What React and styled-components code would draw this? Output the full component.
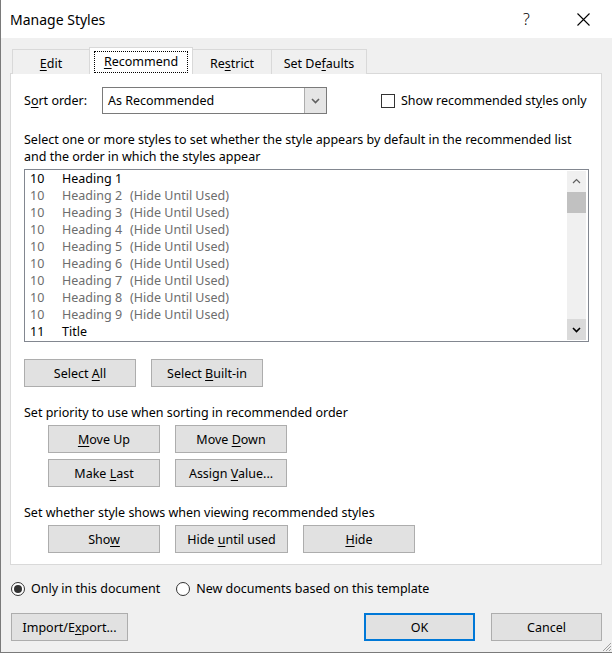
import React from 'react';
import styled, { createGlobalStyle } from 'styled-components';

const GlobalStyle = createGlobalStyle`
  html, body {
    margin: 0;
    padding: 0;
    background: #f0f0f0;
    overflow: hidden;
  }
  body {
    font-family: "Segoe UI", "Noto Sans", sans-serif;
    font-size: 12.5px;
    color: #000;
  }
`;

const Window = styled.div`
  position: relative;
  width: 612px;
  height: 653px;
  box-sizing: border-box;
  border-left: 1px solid #7a7a7a;
  border-bottom: 1px solid #7a7a7a;
  background: #f0f0f0;
  display: flex;
  flex-direction: column;
`;

const TitleBar = styled.div`
  height: 38px;
  flex: none;
  background: #fff;
  display: flex;
  align-items: center;
  padding-left: 9px;
`;

const Title = styled.div`
  flex: 1;
  font-size: 14px;
`;

const TitleButton = styled.div`
  width: 57px;
  height: 38px;
  display: flex;
  align-items: center;
  justify-content: center;
  font-size: 16px;
  font-weight: 300;
`;

const Body = styled.div`
  flex: 1;
  padding: 9px 10px 0 9px;
  display: flex;
  flex-direction: column;
`;

const TabRow = styled.div`
  display: flex;
  align-items: flex-end;
  height: 27px;
  margin-left: 2px;
  margin-bottom: -1px;
  position: relative;
  z-index: 1;
`;

const Tab = styled.div`
  box-sizing: border-box;
  width: ${(p) => p.w}px;
  height: ${(p) => (p.active ? 27 : 25)}px;
  margin-left: ${(p) => (p.first ? 0 : -1)}px;
  border: 1px solid #d9d9d9;
  border-bottom: none;
  background: ${(p) => (p.active ? '#fff' : '#f0f0f0')};
  position: relative;
  z-index: ${(p) => (p.active ? 2 : 1)};
  display: flex;
  justify-content: center;
  align-items: flex-start;
  padding-top: ${(p) => (p.active ? 3 : 4)}px;
  line-height: 19px;
`;

const FocusLabel = styled.span`
  border: 1px dotted #000;
  padding: 0 9px;
  height: 20px;
  line-height: 19px;
`;

const U = styled.span`
  text-decoration: underline;
  text-underline-offset: 2px;
`;

const Panel = styled.div`
  box-sizing: border-box;
  height: 492px;
  background: #fff;
  border: 1px solid #d9d9d9;
  padding: 13px 11px 0 13px;
  display: flex;
  flex-direction: column;
`;

const SortRow = styled.div`
  display: flex;
  align-items: center;
  height: 27px;
`;

const SortLabel = styled.div`
  width: 78px;
`;

const Combo = styled.div`
  box-sizing: border-box;
  width: 225px;
  height: 27px;
  border: 1px solid #7a7a7a;
  display: flex;
  background: #fff;
`;

const ComboValue = styled.div`
  flex: 1;
  padding-left: 5px;
  line-height: 25px;
`;

const ComboArrow = styled.div`
  width: 21px;
  background: #e5e5e5;
  border-left: 1px solid #adadad;
  display: flex;
  align-items: center;
  justify-content: center;
`;

const CheckLabel = styled.label`
  display: flex;
  align-items: center;
  margin-left: 54px;
  gap: 6px;
`;

const CheckBox = styled.span`
  box-sizing: border-box;
  width: 14px;
  height: 14px;
  border: 1px solid #333;
  background: #fff;
`;

const Text = styled.div`
  margin-top: ${(p) => p.mt || 0}px;
  line-height: 17px;
  white-space: nowrap;
`;

const ListBox = styled.div`
  box-sizing: border-box;
  margin-top: 4px;
  width: 565px;
  height: 173px;
  border: 1px solid #828790;
  display: flex;
`;

const Rows = styled.div`
  flex: 1;
  padding-left: 5px;
`;

const Row = styled.div`
  display: flex;
  height: 17px;
  line-height: 17px;
  color: ${(p) => (p.dim ? '#6d6d6d' : '#000')};
`;

const Num = styled.span`
  width: 32px;
`;

const Note = styled.span`
  margin-left: 8px;
`;

const ScrollBar = styled.div`
  width: 19px;
  margin: 1px 2px 1px 0;
  background: #f0f0f0;
  display: flex;
  flex-direction: column;
`;

const ScrollBtn = styled.div`
  height: ${(p) => p.h}px;
  background: ${(p) => p.bg || 'transparent'};
  display: flex;
  align-items: center;
  justify-content: center;
`;

const Thumb = styled.div`
  height: 21px;
  margin-top: 2px;
  background: #c1c1c1;
`;

const Track = styled.div`
  flex: 1;
`;

const ButtonRow = styled.div`
  display: flex;
  gap: 15px;
  margin-top: ${(p) => p.mt || 0}px;
  margin-left: ${(p) => p.indent || 0}px;
`;

const Button = styled.div`
  box-sizing: border-box;
  width: ${(p) => p.w || 112}px;
  height: 28px;
  background: #e1e1e1;
  border: ${(p) => (p.primary ? '2px solid #0078d7' : '1px solid #adadad')};
  display: flex;
  align-items: center;
  justify-content: center;
  white-space: pre;
`;

const RadioRow = styled.div`
  display: flex;
  align-items: center;
  height: 15px;
  margin-top: 16px;
  margin-left: 1px;
`;

const RadioLabel = styled.label`
  display: flex;
  align-items: center;
  gap: 6px;
  margin-right: 16px;
`;

const Radio = styled.span`
  box-sizing: border-box;
  width: 14px;
  height: 14px;
  border-radius: 50%;
  border: 1px solid #333;
  background: #fff;
  display: flex;
  align-items: center;
  justify-content: center;
  &::after {
    content: '';
    display: ${(p) => (p.checked ? 'block' : 'none')};
    width: 8px;
    height: 8px;
    border-radius: 50%;
    background: #333;
  }
`;

const Footer = styled.div`
  display: flex;
  margin-top: 17px;
  margin-left: 1px;
  gap: 16px;
`;

const Spacer = styled.div`
  flex: 1;
`;

const Grip = styled.svg`
  position: absolute;
  right: 0;
  bottom: 0;
`;

const Chevron = ({ down, color = '#606060' }) => (
  <svg width="9" height="6" viewBox="0 0 9 6">
    <path
      d={down ? 'M1 1 L4.5 4.5 L8 1' : 'M1 5 L4.5 1.5 L8 5'}
      fill="none"
      stroke={color}
      strokeWidth={down ? 1.6 : 1.2}
    />
  </svg>
);

const headings = [2, 3, 4, 5, 6, 7, 8, 9];

export default function App() {
  return (
    <>
      <GlobalStyle />
      <Window>
        <TitleBar>
          <Title>Manage Styles</Title>
          <TitleButton>?</TitleButton>
          <TitleButton>
            <svg width="13" height="13" viewBox="0 0 13 13">
              <path d="M0.5 0.5 L12.5 12.5 M12.5 0.5 L0.5 12.5" stroke="#000" strokeWidth="1.1" />
            </svg>
          </TitleButton>
        </TitleBar>
        <Body>
          <TabRow>
            <Tab w={78} first>
              <span><U>E</U>dit</span>
            </Tab>
            <Tab w={104} active>
              <FocusLabel><U>R</U>ecommend</FocusLabel>
            </Tab>
            <Tab w={80}>
              <span>Re<U>s</U>trict</span>
            </Tab>
            <Tab w={96}>
              <span>Set De<U>f</U>aults</span>
            </Tab>
          </TabRow>
          <Panel>
            <SortRow>
              <SortLabel>S<U>o</U>rt order:</SortLabel>
              <Combo>
                <ComboValue>As Recommended</ComboValue>
                <ComboArrow>
                  <Chevron down color="#606060" />
                </ComboArrow>
              </Combo>
              <CheckLabel>
                <CheckBox />
                <span>Show recommended st<U>y</U>les only</span>
              </CheckLabel>
            </SortRow>
            <Text mt={17}>
              Select one or more styles to set whether the style appears by default in the recommended list
            </Text>
            <Text>and the order in which the styles appear</Text>
            <ListBox>
              <Rows>
                <Row>
                  <Num>10</Num>
                  <span>Heading 1</span>
                </Row>
                {headings.map((n) => (
                  <Row dim key={n}>
                    <Num>10</Num>
                    <span>Heading {n}</span>
                    <Note>(Hide Until Used)</Note>
                  </Row>
                ))}
                <Row>
                  <Num>11</Num>
                  <span>Title</span>
                </Row>
              </Rows>
              <ScrollBar>
                <ScrollBtn h={19}>
                  <Chevron color="#606060" />
                </ScrollBtn>
                <Thumb />
                <Track />
                <ScrollBtn h={21} bg="#dadada">
                  <Chevron down color="#000" />
                </ScrollBtn>
              </ScrollBar>
            </ListBox>
            <ButtonRow mt={17}>
              <Button><span>Select <U>A</U>ll</span></Button>
              <Button><span>Select <U>B</U>uilt-in</span></Button>
            </ButtonRow>
            <Text mt={17}>Set priority to use when sorting in recommended order</Text>
            <ButtonRow mt={4} indent={24}>
              <Button><span><U>M</U>ove Up</span></Button>
              <Button><span>Move <U>D</U>own</span></Button>
            </ButtonRow>
            <ButtonRow mt={6} indent={24}>
              <Button><span>Make <U>L</U>ast</span></Button>
              <Button><span>Assign <U>V</U>alue...</span></Button>
            </ButtonRow>
            <Text mt={17}>Set whether style shows when viewing recommended styles</Text>
            <ButtonRow mt={4} indent={24}>
              <Button><span>Sho<U>w</U></span></Button>
              <Button w={113}><span>Hide <U>u</U>ntil used</span></Button>
              <Button><span><U>H</U>ide</span></Button>
            </ButtonRow>
          </Panel>
          <RadioRow>
            <RadioLabel>
              <Radio checked />
              <span>Only in this document</span>
            </RadioLabel>
            <RadioLabel>
              <Radio />
              <span>New documents based on this template</span>
            </RadioLabel>
          </RadioRow>
          <Footer>
            <Button w={117}><span>Import/E<U>x</U>port...</span></Button>
            <Spacer />
            <Button w={111} primary>OK</Button>
            <Button w={111}>Cancel</Button>
          </Footer>
        </Body>
        <Grip width="11" height="11" viewBox="0 0 11 11">
          <path d="M10 2 L2 10 M10 5 L5 10 M10 8 L8 10" stroke="#a0a0a0" strokeWidth="1" />
        </Grip>
      </Window>
    </>
  );
}
